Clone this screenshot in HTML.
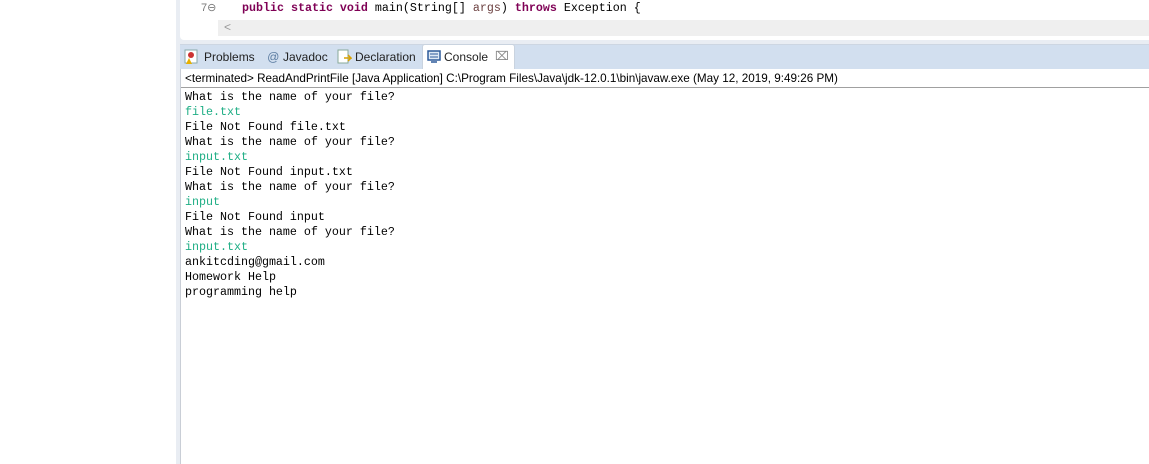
<!DOCTYPE html>
<html><head><style>
*{margin:0;padding:0;box-sizing:border-box}
body{width:1149px;height:464px;background:#fff;position:relative;overflow:hidden;font-family:"Liberation Sans",sans-serif}
.frame{position:absolute;left:176px;top:0;width:973px;height:464px;background:#e9edf3}
.editor{position:absolute;left:180px;top:0;width:969px;height:40px;background:#fff;border-bottom-left-radius:4px}
.code{position:absolute;left:242px;top:1px;font-family:"Liberation Mono",monospace;font-size:11.67px;color:#000;white-space:pre}
.kw{color:#7f0055;font-weight:bold}
.ln{position:absolute;left:201px;top:1px;font-size:11px;color:#787878}
.hs{position:absolute;left:218px;top:20px;width:931px;height:16px;background:#efefef}
.tabbar{position:absolute;left:180px;top:44px;width:969px;height:25px;background:#d2dfef;border-top:1px solid #cdd6e2}
.tab{position:absolute;top:5px;font-size:12px;color:#222}
.ctab{position:absolute;left:242px;top:-1px;width:93px;height:26px;background:#fff;border:1px solid #c9d3df;border-bottom:none;border-radius:3px 3px 0 0}
.console{position:absolute;left:180px;top:69px;width:969px;height:395px;background:#fff;border-left:1px solid #c9ced6}
.hdr{position:absolute;left:0;top:0;width:969px;height:19px;border-bottom:1px solid #a0a0a0;font-size:11.7px;padding:3px 0 0 4px;color:#000;white-space:pre}
.out{position:absolute;left:4px;top:21px;font-family:"Liberation Mono",monospace;font-size:11.67px;line-height:15px;white-space:pre;color:#000}
.g{color:#1fae85}
</style></head><body>
<div class="frame"></div>
<div class="editor">
</div>
<div class="ln">7⊖</div>
<div class="code"><span class="kw">public static void</span> main(String[] <span style="color:#6a3e3e">args</span>) <span class="kw">throws</span> Exception {</div>
<div class="hs"><span style="position:absolute;left:6px;top:0;font-size:12px;color:#999">&lt;</span></div>
<div class="tabbar">
<svg style="position:absolute;left:4px;top:4px" width="15" height="16"><rect x="1" y="1" width="12" height="13" fill="#fff" stroke="#8aa"/><circle cx="7" cy="6" r="3" fill="#c33"/><path d="M2 15 L5 9 L8 15Z" fill="#e8b000"/></svg>
<div class="tab" style="left:24px">Problems</div>
<div class="tab" style="left:87px;color:#5a7ba0;font-style:italic">@</div>
<div class="tab" style="left:103px">Javadoc</div>
<svg style="position:absolute;left:157px;top:4px" width="15" height="16"><rect x="1" y="1" width="10" height="13" fill="#fff" stroke="#8a9"/><path d="M7 9 L14 9 L11 6 M14 9 L11 12" stroke="#d8a000" fill="none" stroke-width="1.5"/></svg>
<div class="tab" style="left:175px">Declaration</div>
<div class="ctab">
<svg style="position:absolute;left:4px;top:5px" width="14" height="13"><rect x="1" y="1" width="12" height="9" fill="#dde8f5" stroke="#2d5a9a" stroke-width="1.5"/><path d="M3 4h8M3 7h8" stroke="#2d5a9a"/><path d="M4 12h6" stroke="#2d5a9a" stroke-width="1.5"/></svg>
<div class="tab" style="left:21px;top:5px">Console</div>
<div class="tab" style="left:72px;top:4px;color:#888">⌧</div>
</div>
</div>
<div class="console">
<div class="hdr">&lt;terminated&gt; ReadAndPrintFile [Java Application] C:\Program Files\Java\jdk-12.0.1\bin\javaw.exe (May 12, 2019, 9:49:26 PM)</div>
<div class="out">What is the name of your file?
<span class="g">file.txt</span>
File Not Found file.txt
What is the name of your file?
<span class="g">input.txt</span>
File Not Found input.txt
What is the name of your file?
<span class="g">input</span>
File Not Found input
What is the name of your file?
<span class="g">input.txt</span>
ankitcding@gmail.com
Homework Help
programming help</div>
</div>
</body></html>
